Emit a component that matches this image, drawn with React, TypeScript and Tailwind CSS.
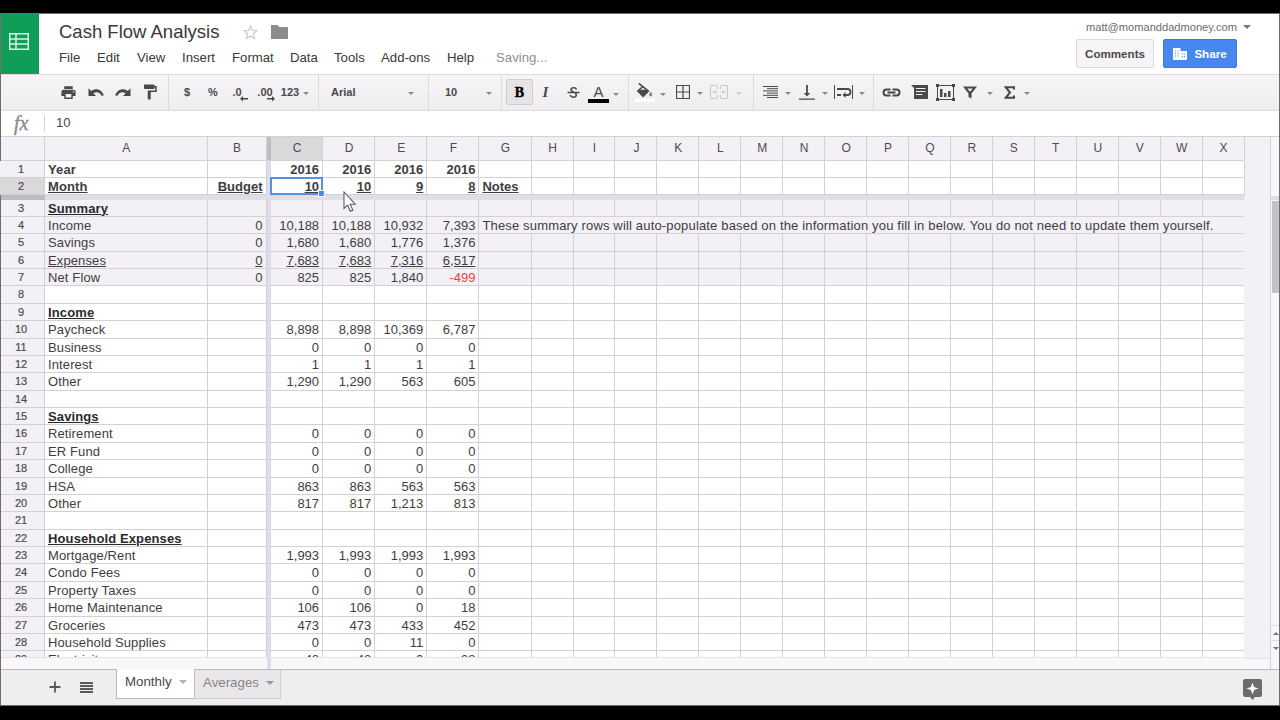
import type { ReactNode } from 'react';
import clsx from 'clsx';
import { MdFormatPaint, MdPrint, MdStarBorder } from 'react-icons/md';

type Row = {
  label?: string;
  budget?: string;
  values?: string[];
  heading?: boolean;
  underline?: boolean;
};

const menus = [
  { name: 'File', width: 'w-[38px]' },
  { name: 'Edit', width: 'w-[40px]' },
  { name: 'View', width: 'w-[45px]' },
  { name: 'Insert', width: 'w-[50px]' },
  { name: 'Format', width: 'w-[58px]' },
  { name: 'Data', width: 'w-[44px]' },
  { name: 'Tools', width: 'w-[47px]' },
  { name: 'Add-ons', width: 'w-[66px]' },
  { name: 'Help', width: 'w-[49px]' },
];

const valueCols = ['C', 'D', 'E', 'F'];
const restCols = 'HIJKLMNOPQRSTUVWX'.split('');

const frozenRows: Row[] = [
  { label: 'Year', values: ['2016', '2016', '2016', '2016'] },
  { label: 'Month', budget: 'Budget', values: ['10', '10', '9', '8'], underline: true },
];

const zeros = ['0', '0', '0', '0'];

const rows: Row[] = [
  { label: 'Summary', heading: true },
  { label: 'Income', budget: '0', values: ['10,188', '10,188', '10,932', '7,393'] },
  { label: 'Savings', budget: '0', values: ['1,680', '1,680', '1,776', '1,376'] },
  { label: 'Expenses', budget: '0', values: ['7,683', '7,683', '7,316', '6,517'], underline: true },
  { label: 'Net Flow', budget: '0', values: ['825', '825', '1,840', '-499'] },
  {},
  { label: 'Income', heading: true },
  { label: 'Paycheck', values: ['8,898', '8,898', '10,369', '6,787'] },
  { label: 'Business', values: zeros },
  { label: 'Interest', values: ['1', '1', '1', '1'] },
  { label: 'Other', values: ['1,290', '1,290', '563', '605'] },
  {},
  { label: 'Savings', heading: true },
  { label: 'Retirement', values: zeros },
  { label: 'ER Fund', values: zeros },
  { label: 'College', values: zeros },
  { label: 'HSA', values: ['863', '863', '563', '563'] },
  { label: 'Other', values: ['817', '817', '1,213', '813'] },
  {},
  { label: 'Household Expenses', heading: true },
  { label: 'Mortgage/Rent', values: ['1,993', '1,993', '1,993', '1,993'] },
  { label: 'Condo Fees', values: zeros },
  { label: 'Property Taxes', values: zeros },
  { label: 'Home Maintenance', values: ['106', '106', '0', '18'] },
  { label: 'Groceries', values: ['473', '473', '433', '452'] },
  { label: 'Household Supplies', values: ['0', '0', '11', '0'] },
  { label: 'Electricity', values: ['43', '43', '0', '38'] },
];

function Caret({ className = 'w-3', light = false }: { className?: string; light?: boolean }) {
  return (
    <div className={clsx('flex shrink-0 justify-center pt-0.5', className)}>
      <div
        className={clsx(
          'h-0 w-0 border-x-[3px] border-t-[3px] border-x-transparent',
          light ? 'border-t-[#d0ced1]' : 'border-t-[#8b898c]'
        )}
      />
    </div>
  );
}

function Tool({ className, children }: { className: string; children: ReactNode }) {
  return <div className={clsx('flex shrink-0 items-center justify-center', className)}>{children}</div>;
}

function Group({ className, children }: { className: string; children: ReactNode }) {
  return (
    <div className={clsx('flex h-full shrink-0 items-center border-r border-[#dcdadd]', className)}>{children}</div>
  );
}

function UndoArrow({ className }: { className?: string }) {
  return (
    <svg className={className} width="16" height="9" viewBox="0 0 16 9" fill="currentColor">
      <path d="M.500.300V8H8L5.400 5.300C8.300 3.400 12 4 13.600 8l2.200-.8C13.800 1.300 7.600-.500 3.200 3z" />
    </svg>
  );
}

function Toolbar() {
  return (
    <div className="flex h-[37px] shrink-0 items-center border-y border-[#dddbde] bg-gradient-to-b from-[#f6f4f7] to-[#efedf0] text-[11px] font-bold text-[#4a484b]">
      <Group className="w-[169px] pl-[55px]">
        <Tool className="w-[27px]"><MdPrint size={17} /></Tool>
        <Tool className="w-[27px]"><UndoArrow /></Tool>
        <Tool className="w-[27px]"><UndoArrow className="-scale-x-100" /></Tool>
        <Tool className="w-[27px]"><MdFormatPaint size={18} /></Tool>
      </Group>
      <Group className="w-[150px] pl-[5px]">
        <Tool className="w-[26px]">$</Tool>
        <Tool className="w-[26px]">%</Tool>
        <Tool className="relative w-[26px] pr-1">
          .0
          <svg className="absolute top-[12px] left-[14px]" width="8" height="6" viewBox="0 0 8 6" fill="currentColor">
            <path d="M3 0v2h5v1.500H3v2L0 2.750z" />
          </svg>
        </Tool>
        <Tool className="relative w-[26px]">
          .00
          <svg className="absolute top-[12px] left-[15px]" width="8" height="6" viewBox="0 0 8 6" fill="currentColor">
            <path d="M5 0v2H0v1.500h5v2l3-2.750z" />
          </svg>
        </Tool>
        <Tool className="w-6">123</Tool>
        <Caret className="w-2" />
      </Group>
      <Group className="w-[110px] pl-3">
        <span className="w-[74px]">Arial</span>
        <Caret />
      </Group>
      <Group className="w-[73px] pl-4">
        <span className="w-[38px]">10</span>
        <Caret />
      </Group>
      <Group className="w-[127px] pl-[4px]">
        <Tool className="h-[26px] w-[27px] rounded-[2px] border border-[#cfcdd0] bg-[#e6e4e7] text-[14px] text-black">
          <span className="font-['Liberation_Serif',serif] [-webkit-text-stroke:0.4px_black]">B</span>
        </Tool>
        <Tool className="w-[25px]">
          <span className="font-['Liberation_Serif',serif] text-[15px] italic">I</span>
        </Tool>
        <Tool className="w-[30px]">
          <svg width="13" height="13" viewBox="0 0 13 13" fill="none" stroke="currentColor" strokeWidth="1.500">
            <path d="M9.500 3.500C9 1 4 1 4 3.600c0 1.400 1.400 2 2.800 2.400M3.300 9c.4 3 6 2.700 6 0 0-.8-.5-1.400-1.200-1.800M.500 6.500h12" />
          </svg>
        </Tool>
        <Tool className="w-[21px] flex-col">
          <span className="h-[16px] text-[15px] leading-[19px] font-normal">A</span>
          <span className="mt-[1px] h-1 w-[21px] bg-black" />
        </Tool>
        <Caret className="w-[14px] pt-1" />
      </Group>
      <Group className="w-[125px] pl-[6px]">
        <Tool className="w-5">
          <svg width="21" height="21" viewBox="0 0 21 21">
            <path d="M4 1l10 8-5.500 5.500L3 9l5.500-5" fill="none" stroke="#4a484b" strokeWidth="1.600" />
            <path d="M3 7.500h10.500l1 1.500-6 6z" fill="#4a484b" />
            <path d="M16.500 9.500c1 1.500 1.700 2.500 1.700 3.400a1.700 1.700 0 0 1-3.400 0c0-.9.700-1.900 1.700-3.400z" fill="#8b898c" />
            <path d="M0 17h21v3.500H0z" fill="#fff" />
          </svg>
        </Tool>
        <Caret className="w-4 pt-1" />
        <Tool className="w-[23px]">
          <svg width="14" height="14" viewBox="0 0 14 14" fill="none" stroke="currentColor">
            <path d="M.500.500h13v13H.500zM7 0v14M0 7h14" strokeWidth="1.200" />
          </svg>
        </Tool>
        <Caret />
        <Tool className="w-[26px] text-[#c9c7ca]">
          <svg width="18" height="14" viewBox="0 0 18 14" fill="none" stroke="currentColor">
            <path d="M7 .500H.500v13H7M11 .500h6.500v13H11M7.500 1v3M10.500 1v3M7.500 10v3M10.500 10v3M2 7h4.500M4.500 5l2 2-2 2M16 7h-4.500M13.500 5l-2 2 2 2" />
          </svg>
        </Tool>
        <Caret className="w-[13px]" light />
      </Group>
      <Group className="w-[120px] pl-[6px]">
        <Tool className="w-5">
          <svg width="15" height="12" viewBox="0 0 15 12" stroke="currentColor">
            <path d="M0 .500h15M4 2.700h11M0 4.900h15M4 7.100h11M0 9.300h15M4 11.500h11" />
          </svg>
        </Tool>
        <Caret className="w-4" />
        <Tool className="w-[22px]">
          <svg width="16" height="15" viewBox="0 0 16 15" fill="currentColor">
            <path d="M7.100 0h1.800v8h2.300L8 11.500 4.800 8h2.300zM0 13.500h16v1.200H0z" />
          </svg>
        </Tool>
        <Caret className="w-[13px]" />
        <Tool className="w-[25px]">
          <svg width="19" height="14" viewBox="0 0 19 14" fill="none" stroke="currentColor">
            <path d="M.500 0v14M18.500 0v14" />
            <path d="M3 4h10.500a3 3 0 0 1 0 6H11M3 10h4" strokeWidth="1.800" />
            <path d="M11.500 7v6L8.500 10z" fill="currentColor" stroke="none" />
          </svg>
        </Tool>
        <Caret className="w-[11px]" />
      </Group>
      <div className="flex items-center pl-[5px]">
        <Tool className="w-6">
          <svg width="19" height="9" viewBox="0 0 19 9" fill="none" stroke="currentColor" strokeWidth="2">
            <path d="M8.500 1.500H4.500a3 3 0 0 0 0 6h4M10.500 1.500h4a3 3 0 0 1 0 6h-4M5.500 4.500h8" />
          </svg>
        </Tool>
        <Tool className="w-8">
          <svg width="17" height="14" viewBox="0 0 17 14">
            <path d="M0 0h17v14H3V3z" fill="#4a484b" />
            <path d="M5 3.500h9.500M5 6.500h9.500M5 9.500h6.500" stroke="#f3f1f4" />
          </svg>
        </Tool>
        <Tool className="w-5">
          <svg width="19" height="17" viewBox="0 0 19 17" fill="currentColor">
            <path d="M1.500 1.500h16v14h-16z" fill="none" stroke="currentColor" />
            <path d="M0 0h3v3H0zM16 0h3v3h-3zM0 14h3v3H0zM16 14h3v3h-3zM4 5h2.500v8H4zM8 9h2.500v4H8zM12 7h2.500v6H12z" />
          </svg>
        </Tool>
        <Tool className="w-[30px]">
          <svg width="14" height="13" viewBox="0 0 14 13">
            <path d="M0 .500h14L8.500 7.500V12.500L5.500 11V7.500z" fill="#4a484b" />
            <path d="M4.300 2.500h5.400L7 5.800z" fill="#f3f1f4" />
          </svg>
        </Tool>
        <Caret className="w-[10px]" />
        <Tool className="w-[29px]">
          <svg width="11" height="13" viewBox="0 0 11 13" fill="none" stroke="currentColor" strokeWidth="2">
            <path d="M10 3.500V1.200H1.700L6 6.500l-4.300 5.300H10V9.500" />
          </svg>
        </Tool>
        <Caret className="w-[6px]" />
      </div>
    </div>
  );
}

function Header() {
  return (
    <header className="flex h-[60.500px] shrink-0 bg-white">
      <div className="flex w-[39px] shrink-0 items-center justify-center bg-[#0f9d58] pr-[1px]">
        <svg className="mt-[-3px]" width="20" height="17" viewBox="0 0 20 17" fill="none" stroke="#d8f5e2" strokeWidth="1.500">
          <path d="M.750.750h18.500v15.500H.750zM7 1v15M1 6h18M1 11h18" />
        </svg>
      </div>
      <div className="flex flex-1 flex-col pl-5">
        <div className="flex h-[37px] items-center pt-px">
          <h1 className="w-[182px] text-[18.500px] whitespace-nowrap text-[#3a383b]">Cash Flow Analysis</h1>
          <MdStarBorder className="text-[#cfcdd0]" size={19} />
          <svg className="ml-[11px]" width="17" height="14" viewBox="0 0 17 14" fill="#8d8b8e">
            <path d="M0 0h6.500l1.800 2H17v12H0z" />
          </svg>
        </div>
        <nav className="flex h-[15px] items-center text-[13.200px] whitespace-nowrap text-[#3a383b]">
          {menus.map((menu) => (
            <span key={menu.name} className={clsx('shrink-0', menu.width)}>{menu.name}</span>
          ))}
          <span className="text-[#918f92]">Saving...</span>
        </nav>
      </div>
      <div className="flex w-[204px] flex-col">
        <div className="flex h-[26px] items-center gap-[6px] pt-[2px] pl-[10px] text-[11.100px] text-[#6d6b6e]">
          matt@momanddadmoney.com
          <span className="h-0 w-0 border-x-4 border-t-4 border-x-transparent border-t-[#777578]" />
        </div>
        <div className="flex gap-[9px] text-[11.600px] font-bold">
          <button className="h-[29px] w-[78px] rounded-[2px] border border-[#dcdadd] bg-[#f6f4f7] text-[#4a484b]">Comments</button>
          <button className="flex h-[29px] w-[74px] items-center justify-center gap-[7px] rounded-[2px] border border-[#3b79e8] bg-[#4787f0] text-white">
            <svg width="14" height="12" viewBox="0 0 14 12">
              <path d="M0 0h7.500v3H14v9H0z" fill="#fff" />
              <path d="M2 3h1M4.500 3h1M2 5.500h1M4.500 5.500h1M2 8h1M4.500 8h1M9 6h1M11 6h1M9 8.500h1M11 8.500h1" stroke="#4787f0" />
            </svg>
            Share
          </button>
        </div>
      </div>
    </header>
  );
}

function ColumnHeaders() {
  const cell = 'flex shrink-0 items-center justify-center border-r border-[#d3d1d5] pl-px';
  return (
    <div className="flex h-[25px] shrink-0 border-y border-[#d3d1d5] bg-[#f3f1f5] text-[12px] text-[#4d4b50]">
      <div className={clsx(cell, 'w-[45px]')} />
      <div className={clsx(cell, 'w-[162.500px]')}>A</div>
      <div className={clsx(cell, 'w-[59px]')}>B</div>
      <div className="w-[4.500px] shrink-0 bg-[#bfbdc1]" />
      {valueCols.map((name) => (
        <div key={name} className={clsx(cell, 'w-[52.100px]', name === 'C' && 'bg-[#dad8db]')}>{name}</div>
      ))}
      <div className={clsx(cell, 'w-[52.200px]')}>G</div>
      {restCols.map((name) => (
        <div key={name} className={clsx(cell, 'w-[41.940px]')}>{name}</div>
      ))}
    </div>
  );
}

function SheetRow({ row, number, frozen = false }: { row: Row; number: number; frozen?: boolean }) {
  const shaded = number >= 3 && number <= 7;
  const line = 'shrink-0 border-r border-b border-[#d3d1d5]';
  const decoration = row.underline && 'underline';
  return (
    <div
      className={clsx(
        'flex h-[17.375px] shrink-0 text-[13px] leading-[17.500px] whitespace-nowrap text-[#3f3d42]',
        shaded ? 'bg-[#f3f1f5]' : 'bg-white',
        frozen && 'font-bold text-[#2b292e]'
      )}
    >
      <div
        className={clsx(
          line,
          'w-[45px] pr-[2px] text-center text-[11px] font-normal text-[#4d4b50] [-webkit-text-stroke:0.2px_#4d4b50]',
          number === 2 ? 'bg-[#dad8db]' : 'bg-[#f3f1f5]'
        )}
      >
        {number}
      </div>
      <div
        className={clsx(line, 'w-[162.500px] pl-[3px] tracking-[0.120px]', decoration, row.heading && 'font-bold text-[#2b292e] underline')}
      >
        {row.label}
      </div>
      <div className={clsx(line, 'w-[59px] pr-[3px] text-right', decoration)}>{row.budget}</div>
      <div className="w-[4.500px] shrink-0 bg-[#dfddea]" />
      {valueCols.map((name, i) => {
        const value = row.values?.[i];
        const selected = frozen && number === 2 && name === 'C';
        return (
          <div
            key={name}
            className={clsx(line, 'relative w-[52.100px] pr-[3px] text-right', decoration, value?.startsWith('-') && 'text-[#f04040]')}
          >
            {value}
            {selected && (
              <span className="absolute -inset-x-px -top-px -bottom-px border-2 border-[#5590e4]">
                <span className="absolute -right-[4px] -bottom-[4px] h-[7px] w-[7px] border border-white bg-[#4a86e8]" />
              </span>
            )}
          </div>
        );
      })}
      {number === 4 ? (
        <div className={clsx(line, 'w-[765.180px] pl-[3px] tracking-[0.165px]')}>
          These summary rows will auto-populate based on the information you fill in below. You do not need to update them yourself.
        </div>
      ) : (
        <>
          <div className={clsx(line, 'w-[52.200px] pl-[3px] underline')}>{number === 2 && 'Notes'}</div>
          {restCols.map((name) => (
            <div key={name} className={clsx(line, 'w-[41.940px]')} />
          ))}
        </>
      )}
    </div>
  );
}

function Sheet() {
  return (
    <div className="flex h-[533.500px] shrink-0 bg-[#f3f1f5]">
      <div className="flex w-[1244px] shrink-0 flex-col">
        <ColumnHeaders />
        <div className="relative z-10 flex shrink-0 flex-col">
          {frozenRows.map((row, i) => (
            <SheetRow key={i} row={row} number={i + 1} frozen />
          ))}
        </div>
        <div className="flex h-[4.250px] shrink-0">
          <div className="w-[45px] bg-[#bfbdc1]" />
          <div className="flex-1 bg-[#dfddea]" />
        </div>
        <div className="flex h-[457.500px] shrink-0 flex-col overflow-hidden">
          {rows.map((row, i) => (
            <SheetRow key={i} row={row} number={i + 3} />
          ))}
        </div>
        <div className="flex flex-1 border-t border-[#e3e1e5] bg-[#f9f7fa] pl-[266.500px]">
          <div className="w-[4.500px] bg-[#dfddea]" />
        </div>
      </div>
      <div className="flex flex-1 flex-col border-t border-[#d3d1d5]">
        <div className="h-[521px]" />
        <div className="flex-1 border-t border-[#e3e1e5] bg-[#f9f7fa]" />
      </div>
      <div className="flex w-[10px] shrink-0 flex-col border-t border-l border-[#d3d1d5] bg-[#f9f7fa]">
        <div className="h-[59px]" />
        <div className="h-1 bg-[#dfddea]" />
        <div className="mt-px ml-px h-[92px] bg-[#c3c1c4]" />
        <div className="flex-1" />
        <div className="flex h-4 items-center justify-center border-y border-[#dddbde]">
          <span className="border-x-[3px] border-b-[3px] border-x-transparent border-b-[#777578]" />
        </div>
        <div className="flex h-[28px] justify-center pt-[6px]">
          <span className="h-0 border-x-[3px] border-t-[3px] border-x-transparent border-t-[#777578]" />
        </div>
      </div>
    </div>
  );
}

function SheetTabs() {
  return (
    <footer className="flex h-[37px] shrink-0 items-start border-t border-[#bcbabd] bg-[#efedf0] text-[13.300px]">
      <div className="flex h-[34px] w-[116px] items-center pl-[49px] text-[#5a585b]">
        <svg width="12" height="12" viewBox="0 0 12 12" stroke="currentColor" strokeWidth="1.800">
          <path d="M6 .500v11M.500 6h11" />
        </svg>
        <svg className="ml-[19px]" width="13" height="11" viewBox="0 0 13 11" stroke="currentColor" strokeWidth="1.800">
          <path d="M0 1h13M0 4h13M0 7h13M0 10h13" />
        </svg>
      </div>
      <div className="-mt-px flex h-[30px] w-[79px] items-center border border-t-0 border-[#bcbabd] bg-white pb-[3px] pl-[8px] text-[#4a484b]">
        <span className="w-[54px]">Monthly</span>
        <span className="h-0 border-x-4 border-t-4 border-x-transparent border-t-[#b3b1b4]" />
      </div>
      <div className="flex h-[29px] w-[86px] items-center border-r border-b border-[#cfcdd0] bg-[#e9e7ea] pb-[2px] pl-2 text-[#858386]">
        <span className="w-[63px]">Averages</span>
        <span className="h-0 border-x-4 border-t-4 border-x-transparent border-t-[#999799]" />
      </div>
      <div className="mt-[9px] ml-auto pr-[18px]">
        <svg width="19" height="21" viewBox="0 0 19 21">
          <path d="M2 0h15a2 2 0 0 1 2 2v14a2 2 0 0 1-2 2h-5l-2.500 3L7 18H2a2 2 0 0 1-2-2V2a2 2 0 0 1 2-2z" fill="#6d6b6e" />
          <path d="M9.500 3.500l1.600 4.400 4.400 1.600-4.400 1.600-1.600 4.400-1.600-4.400-4.400-1.600 4.400-1.600z" fill="#fff" />
        </svg>
      </div>
    </footer>
  );
}

export default function App() {
  return (
    <div className="relative h-[720px] w-[1280px] overflow-hidden bg-black pt-[13px] font-['Liberation_Sans',Arial,sans-serif]">
      <div className="flex h-[693px] flex-col">
        <Header />
        <Toolbar />
        <div className="flex h-[25px] shrink-0 items-center bg-white text-[13px] text-[#4a484b]">
          <span className="w-[44px] pl-[14px] font-['Liberation_Serif',serif] text-[20px] leading-none text-[#8d8b8e] italic [-webkit-text-stroke:0.4px_#8d8b8e]">fx</span>
          <span className="h-[17px] w-[12px] border-l border-[#d3d1d5]" />
          10
        </div>
        <Sheet />
        <SheetTabs />
      </div>
      {/* darkened window edges */}
      <div className="absolute top-[13px] left-0 h-[693px] w-full border-x border-y border-[#6f6d70]" />
      <svg className="absolute top-[191px] left-[343px] z-20" width="14" height="22" viewBox="0 0 14 22">
        <path d="M1 1v16.500l3.600-3.300 2.600 6 2.600-1.100-2.600-5.900h5z" fill="#fff" stroke="#5d5b60" strokeWidth="1.100" />
      </svg>
    </div>
  );
}
